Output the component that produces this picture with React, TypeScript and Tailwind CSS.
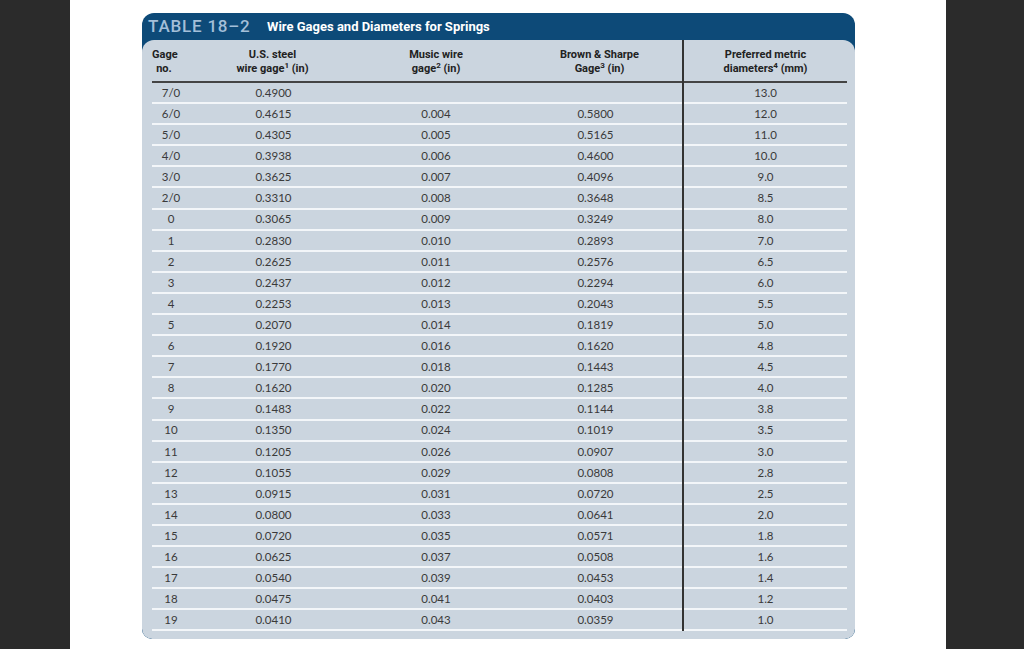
import React from "react";

const rows: [string, string, string, string, string][] = [
  ["7/0", "0.4900", "", "", "13.0"],
  ["6/0", "0.4615", "0.004", "0.5800", "12.0"],
  ["5/0", "0.4305", "0.005", "0.5165", "11.0"],
  ["4/0", "0.3938", "0.006", "0.4600", "10.0"],
  ["3/0", "0.3625", "0.007", "0.4096", "9.0"],
  ["2/0", "0.3310", "0.008", "0.3648", "8.5"],
  ["0", "0.3065", "0.009", "0.3249", "8.0"],
  ["1", "0.2830", "0.010", "0.2893", "7.0"],
  ["2", "0.2625", "0.011", "0.2576", "6.5"],
  ["3", "0.2437", "0.012", "0.2294", "6.0"],
  ["4", "0.2253", "0.013", "0.2043", "5.5"],
  ["5", "0.2070", "0.014", "0.1819", "5.0"],
  ["6", "0.1920", "0.016", "0.1620", "4.8"],
  ["7", "0.1770", "0.018", "0.1443", "4.5"],
  ["8", "0.1620", "0.020", "0.1285", "4.0"],
  ["9", "0.1483", "0.022", "0.1144", "3.8"],
  ["10", "0.1350", "0.024", "0.1019", "3.5"],
  ["11", "0.1205", "0.026", "0.0907", "3.0"],
  ["12", "0.1055", "0.029", "0.0808", "2.8"],
  ["13", "0.0915", "0.031", "0.0720", "2.5"],
  ["14", "0.0800", "0.033", "0.0641", "2.0"],
  ["15", "0.0720", "0.035", "0.0571", "1.8"],
  ["16", "0.0625", "0.037", "0.0508", "1.6"],
  ["17", "0.0540", "0.039", "0.0453", "1.4"],
  ["18", "0.0475", "0.041", "0.0403", "1.2"],
  ["19", "0.0410", "0.043", "0.0359", "1.0"],
];

const headFont = { fontFamily: "Roboto, 'Liberation Sans', sans-serif" };
const numFont = { fontFamily: "Lato, 'Liberation Sans', sans-serif" };

const Sup = ({ n }: { n: string }) => <sup className="text-[8px]">{n}</sup>;

export default function App() {
  return (
    <div className="flex h-[649px] w-[1024px] overflow-hidden">
      <div className="w-[70px] bg-[#2b2b2b]" />

      <div className="flex-1 bg-white pl-[72px] pt-[13px]">
        <div className="w-[713px] rounded-t-[12px] rounded-b-[10px] bg-[#0d4a78] overflow-hidden">
          {/* title bar */}
          <div className="h-[27px] flex items-center pl-[6px] pt-[1px] gap-[17px]">
            <span
              className="w-[102px] text-[17px] font-medium tracking-[0.8px] whitespace-nowrap text-[#a3bfd9]"
              style={headFont}
            >
              TABLE 18–2
            </span>
            <span className="text-[13px] font-bold text-white" style={headFont}>
              Wire Gages and Diameters for Springs
            </span>
          </div>

          {/* body */}
          <div className="bg-[#cbd5df] rounded-t-[12px] rounded-b-[10px] pl-[10px] pr-[8px] pb-[8px] flex">
            {/* first four columns */}
            <div className="w-[532px] border-r-2 border-[#333]">
              <div
                className="h-[43px] flex items-center pt-[2px] border-b-2 border-[#444] text-[11px] leading-[14px] font-bold text-[#222] text-center"
                style={headFont}
              >
                <div className="w-[38px] pr-[14px]">Gage<br />no.</div>
                <div className="w-[165px]">U.S. steel<br />wire gage<Sup n="1" /> (in)</div>
                <div className="w-[162px]">Music wire<br />gage<Sup n="2" /> (in)</div>
                <div className="flex-1">Brown &amp; Sharpe<br />Gage<Sup n="3" /> (in)</div>
              </div>
              {rows.map((r, i) => (
                <div
                  key={i}
                  className="h-[21.1px] flex items-center border-b-2 border-[#f3f6f9] text-[11.5px] text-[#3a3a3a] text-center"
                  style={numFont}
                >
                  <div className="w-[38px]">{r[0]}</div>
                  <div className="w-[165px] pl-[2px]">{r[1]}</div>
                  <div className="w-[162px]">{r[2]}</div>
                  <div className="flex-1 pr-[8px]">{r[3]}</div>
                </div>
              ))}
            </div>

            {/* metric column */}
            <div className="flex-1">
              <div
                className="h-[43px] flex items-center justify-center pt-[2px] border-b-2 border-[#444] text-[11px] leading-[14px] font-bold text-[#222] text-center"
                style={headFont}
              >
                <div>Preferred metric<br />diameters<Sup n="4" /> (mm)</div>
              </div>
              {rows.map((r, i) => (
                <div
                  key={i}
                  className="h-[21.1px] flex items-center justify-center border-b-2 border-[#f3f6f9] text-[11.5px] text-[#3a3a3a]"
                  style={numFont}
                >
                  {r[4]}
                </div>
              ))}
            </div>
          </div>
        </div>
      </div>

      <div className="w-[78px] bg-[#2b2b2b]" />
    </div>
  );
}
